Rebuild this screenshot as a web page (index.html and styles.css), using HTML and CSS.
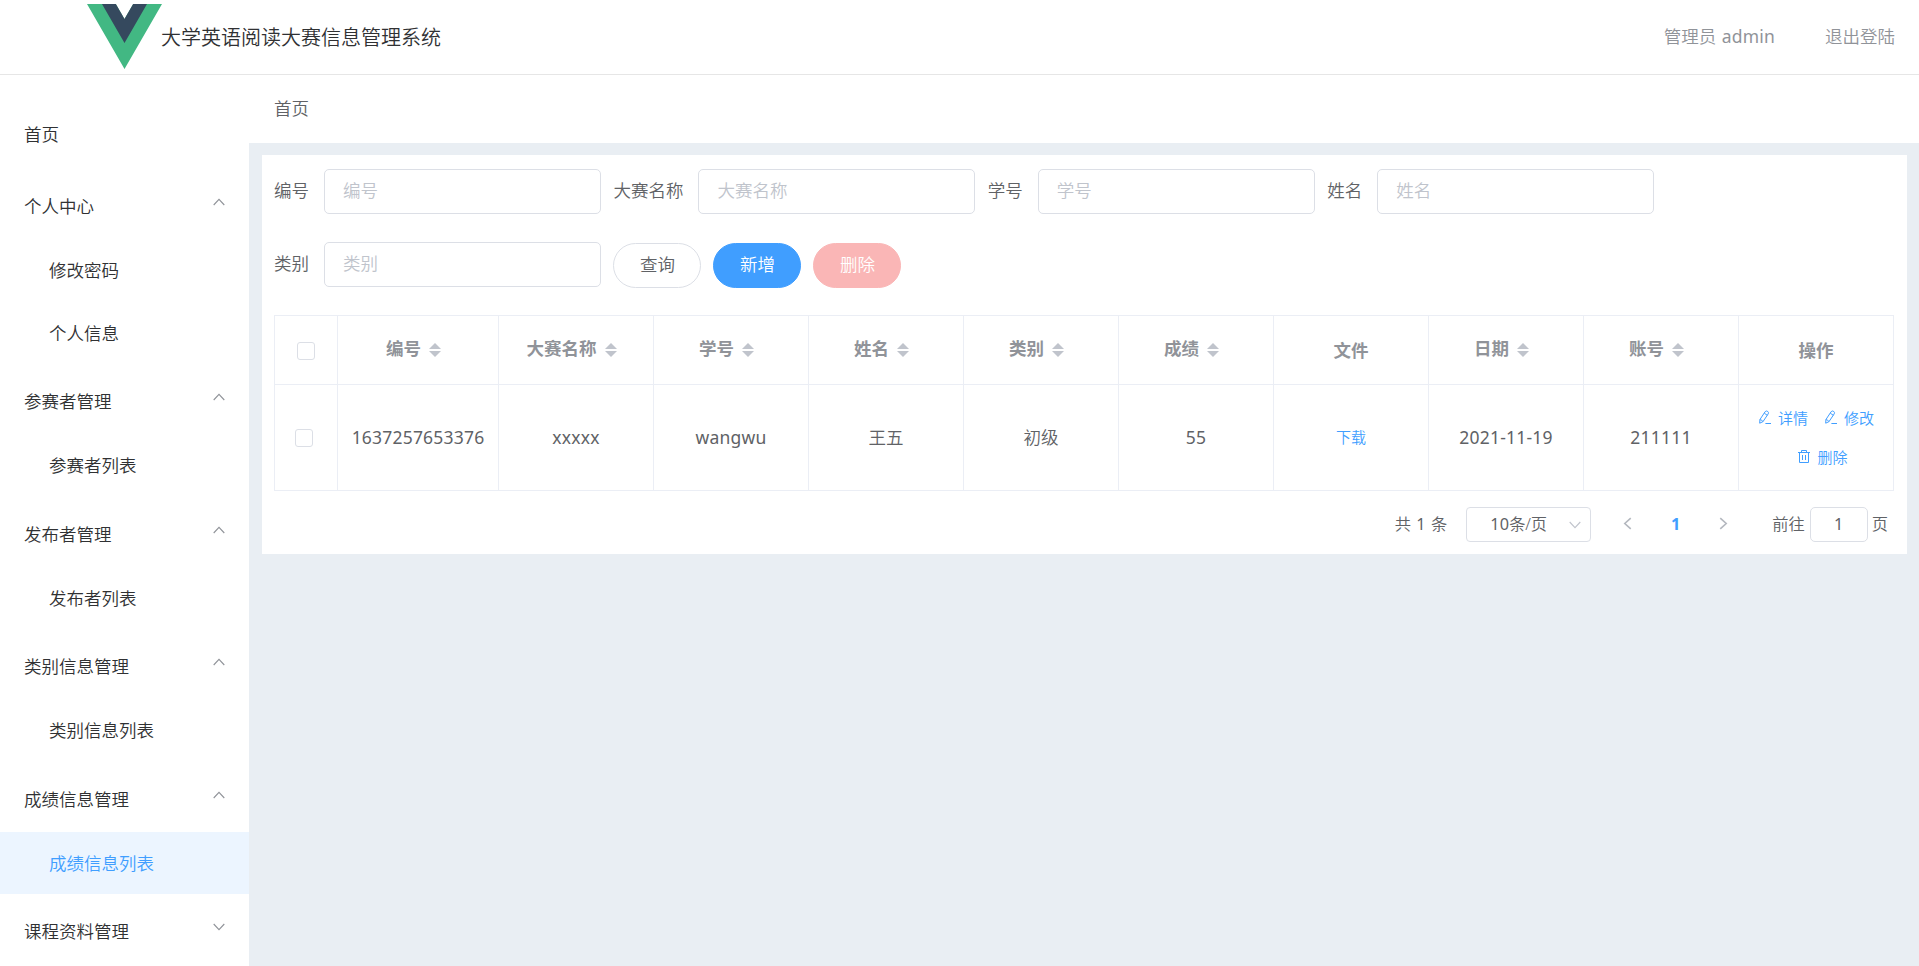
FILE: index.html
```html
<!DOCTYPE html>
<html lang="zh-CN">
<head>
  <meta charset="UTF-8" />
  <meta name="viewport" content="width=device-width, initial-scale=1.0"/>
  <title>大学英语阅读大赛信息管理系统</title>
  <link rel="stylesheet" href="styles.css">
</head>
<body>
  <!-- icons -->
  <svg class="sprite">
    <symbol id="arrow" viewBox="0 0 12 8"><path d="M0.7 1L6 6.6L11.3 1" fill="none" stroke="currentColor" stroke-width="1.1"/></symbol>
    <symbol id="edit" viewBox="0 0 14 15"><path d="M7.2 1.6Q8.4 0.4 9.8 1.5Q11 2.6 10.2 3.9L5 11.6L1.7 13.2L1.9 9.6ZM6.3 3.2L9.3 5.3M1.9 9.6Q4 9.8 5 11.6M7.4 13.5H13" fill="none" stroke="currentColor"/></symbol>
    <symbol id="trash" viewBox="0 0 14 15"><path d="M1 3.5H13M4.5 3V1.5H9.5V3M2.5 3.5V13.5H11.5V3.5M5.5 6V11M8.5 6V11" fill="none" stroke="currentColor"/></symbol>
  </svg>

  <header class="header">
    <div class="brand">
      <svg class="logo" viewBox="0 0 196.32 170.02">
        <path fill="#42b883" d="M120.83 0L98.16 39.26L75.49 0H0L98.16 170.02L196.32 0Z"/>
        <path fill="#35495e" d="M120.83 0L98.16 39.26L75.49 0H39.26L98.16 102.01L157.06 0Z"/>
      </svg>
      <span class="title">大学英语阅读大赛信息管理系统</span>
    </div>
    <div class="user">
      <span>管理员 <span class="latin">admin</span></span>
      <span>退出登陆</span>
    </div>
  </header>

  <div class="container">
    <aside class="sidebar">
      <div class="menu-title home">首页</div>
      <div class="menu-title">个人中心<svg class="arrow up"><use href="#arrow"/></svg></div>
      <div class="menu-item">修改密码</div>
      <div class="menu-item">个人信息</div>
      <div class="menu-title">参赛者管理<svg class="arrow up"><use href="#arrow"/></svg></div>
      <div class="menu-item">参赛者列表</div>
      <div class="menu-title">发布者管理<svg class="arrow up"><use href="#arrow"/></svg></div>
      <div class="menu-item">发布者列表</div>
      <div class="menu-title">类别信息管理<svg class="arrow up"><use href="#arrow"/></svg></div>
      <div class="menu-item">类别信息列表</div>
      <div class="menu-title">成绩信息管理<svg class="arrow up"><use href="#arrow"/></svg></div>
      <div class="menu-item active">成绩信息列表</div>
      <div class="menu-title">课程资料管理<svg class="arrow"><use href="#arrow"/></svg></div>
    </aside>

    <main class="main">
      <div class="breadcrumb">首页</div>

      <div class="card">
        <form class="search">
          <div class="form-item"><label>编号</label><input type="text" placeholder="编号"></div>
          <div class="form-item"><label>大赛名称</label><input type="text" placeholder="大赛名称"></div>
          <div class="form-item"><label>学号</label><input type="text" placeholder="学号"></div>
          <div class="form-item"><label>姓名</label><input type="text" placeholder="姓名"></div>
          <div class="form-item"><label>类别</label><input type="text" placeholder="类别"></div>
          <div class="buttons">
            <button type="button" class="btn">查询</button>
            <button type="button" class="btn primary">新增</button>
            <button type="button" class="btn danger" disabled>删除</button>
          </div>
        </form>

        <table class="table">
          <colgroup>
            <col class="col-check">
            <col class="col-id">
            <col span="9">
          </colgroup>
          <thead>
            <tr>
              <th><span class="checkbox"></span></th>
              <th class="sortable">编号<i class="sort"></i></th>
              <th class="sortable">大赛名称<i class="sort"></i></th>
              <th class="sortable">学号<i class="sort"></i></th>
              <th class="sortable">姓名<i class="sort"></i></th>
              <th class="sortable">类别<i class="sort"></i></th>
              <th class="sortable">成绩<i class="sort"></i></th>
              <th>文件</th>
              <th class="sortable">日期<i class="sort"></i></th>
              <th class="sortable">账号<i class="sort"></i></th>
              <th>操作</th>
            </tr>
          </thead>
          <tbody>
            <tr>
              <td class="check-cell"><span class="checkbox"></span></td>
              <td class="latin">1637257653376</td>
              <td class="latin">xxxxx</td>
              <td class="latin">wangwu</td>
              <td>王五</td>
              <td>初级</td>
              <td class="latin">55</td>
              <td class="file-cell"><a class="link">下载</a></td>
              <td class="latin">2021-11-19</td>
              <td class="latin">211111</td>
              <td>
                <div class="actions">
                  <a class="link"><svg class="icon"><use href="#edit"/></svg>详情</a>
                  <a class="link"><svg class="icon"><use href="#edit"/></svg>修改</a>
                  <a class="link delete"><svg class="icon"><use href="#trash"/></svg>删除</a>
                </div>
              </td>
            </tr>
          </tbody>
        </table>

        <div class="pagination">
          <span class="total">共 <span class="latin">1</span> 条</span>
          <div class="page-size"><span><span class="latin">10</span>条/页</span><svg class="arrow"><use href="#arrow"/></svg></div>
          <svg class="pager-btn" viewBox="0 0 8 12"><path d="M7 1L1.5 6L7 11"/></svg>
          <span class="page-num">1</span>
          <svg class="pager-btn" viewBox="0 0 8 12"><path d="M1 1L6.5 6L1 11"/></svg>
          <span class="jump-label">前往</span>
          <input class="jump latin" type="text" value="1">
          <span class="jump-unit">页</span>
        </div>
      </div>
    </main>
  </div>
</body>
</html>
```

FILE: styles.css
```css
* {
  box-sizing: border-box;
}

body {
  margin: 0;
  height: 966px;
  overflow: hidden;
  display: flex;
  flex-direction: column;
  font-family: "Noto Sans", "Noto Sans CJK SC", sans-serif;
  font-size: 17.5px;
  font-weight: 350;
  color: #606266;
  background: #fff;
}

.latin {
  font-weight: 400;
  letter-spacing: 0.2px;
}

.sprite {
  display: none;
}

.header {
  display: flex;
  justify-content: space-between;
  flex: none;
  height: 75px;
  padding: 0 24px 0 87px;
  border-bottom: 1px solid #e6e6e6;
}

.brand {
  display: flex;
}

.logo {
  width: 75px;
  height: 65px;
  margin-top: 4px;
}

.title {
  margin-left: -1px;
  font-size: 20px;
  line-height: 75px;
  color: #303133;
}

.user {
  display: flex;
  gap: 50px;
  line-height: 73px;
  word-spacing: 1px;
  color: #909399;
}

.container {
  display: flex;
  flex: 1;
  min-height: 0;
}

/* sidebar */
.sidebar {
  flex: none;
  width: 249px;
  padding-top: 24px;
  overflow: hidden;
  color: #303133;
}

.menu-title {
  display: flex;
  justify-content: space-between;
  height: 70px;
  line-height: 74px;
  padding: 0 24px;
}

.menu-title.home {
  line-height: 70px;
}

.menu-item {
  height: 62.5px;
  line-height: 62.5px;
  padding-left: 49px;
}

.menu-item.active {
  color: #409eff;
  background: #ecf5ff;
}

.arrow {
  flex: none;
  width: 12px;
  height: 8px;
  margin-top: 29px;
  color: #909399;
}

.arrow.up {
  transform: rotate(180deg);
}

/* content */
.main {
  flex: 1;
  background: #e9eef3;
}

.breadcrumb {
  height: 68px;
  padding-left: 25px;
  line-height: 67px;
  background: #fff;
}

.card {
  height: 399px;
  margin: 12px 12px 0 13px;
  padding: 14px 12px 0;
  background: #fff;
}

.search {
  display: flex;
  flex-wrap: wrap;
  align-content: flex-start;
  column-gap: 12.4px;
  row-gap: 28px;
  height: 146px;
}

.form-item {
  display: flex;
  height: 45px;
}

.form-item label {
  padding-right: 15px;
  line-height: 43px;
}

input {
  font-family: inherit;
  font-size: inherit;
  color: inherit;
  background: #fff;
  border: 1px solid #dcdfe6;
  border-radius: 5px;
  outline: none;
}

.form-item input {
  width: 277px;
  height: 45px;
  padding: 0 18px 3px;
  font-weight: 350;
}

input::placeholder {
  color: #c0c4cc;
}

.buttons {
  display: flex;
  gap: 12px;
  padding-top: 1px;
}

.btn {
  width: 88px;
  height: 45px;
  padding: 0 0 5px;
  font: inherit;
  color: #606266;
  background: #fff;
  border: 1px solid #dcdfe6;
  border-radius: 23px;
}

.btn.primary {
  color: #fff;
  background: #409eff;
  border-color: #409eff;
}

.btn.danger {
  color: #fff;
  background: #fab6b6;
  border-color: #fab6b6;
}

/* table */
.table {
  width: 1620px;
  table-layout: fixed;
  border-collapse: separate;
  border-spacing: 0;
  border-top: 1px solid #ebeef5;
  border-left: 1px solid #ebeef5;
  text-align: center;
}

.col-check {
  width: 63px;
}

.col-id {
  width: 161px;
}

th,
td {
  padding: 0 0 2px;
  border-right: 1px solid #ebeef5;
  border-bottom: 1px solid #ebeef5;
}

th {
  height: 69px;
  font-weight: bold;
  color: #909399;
}

th.sortable {
  padding-bottom: 6px;
}

td {
  height: 106px;
}

td.file-cell {
  padding-bottom: 4px;
}

.checkbox {
  display: inline-block;
  width: 18px;
  height: 18px;
  vertical-align: middle;
  border: 1px solid #dcdfe6;
  border-radius: 3px;
}

td.check-cell {
  padding: 0 5px 3px 0;
}

.sort {
  display: inline-flex;
  flex-direction: column;
  gap: 2px;
  margin: 0 9px 0 8px;
  vertical-align: middle;
}

.sort::before,
.sort::after {
  content: "";
  border: 6.5px solid transparent;
}

.sort::before {
  border-top: 0;
  border-bottom: 6px solid #c0c4cc;
}

.sort::after {
  border-bottom: 0;
  border-top: 6px solid #c0c4cc;
}

.link {
  display: inline-flex;
  align-items: center;
  font-size: 15px;
  color: #409eff;
}

.actions {
  display: flex;
  flex-wrap: wrap;
  justify-content: center;
  column-gap: 16px;
  row-gap: 18px;
}

.delete {
  margin-left: 13px;
}

.icon {
  width: 14px;
  height: 15px;
  margin-right: 6px;
}

/* pagination */
.pagination {
  display: flex;
  align-items: center;
  justify-content: flex-end;
  height: 35px;
  margin-top: 16px;
  padding-right: 7px;
  font-size: 16.25px;
}

.total,
.page-size > span,
.jump-label,
.jump-unit {
  padding-bottom: 3px;
}

.total {
  word-spacing: 1px;
}

.page-size {
  display: flex;
  align-items: center;
  justify-content: space-between;
  width: 125px;
  height: 35px;
  margin: 0 32px 0 19px;
  padding: 0 9px 0 23px;
  border: 1px solid #dcdfe6;
  border-radius: 4px;
}

.page-size > span {
  letter-spacing: -0.2px;
}

.page-size .arrow {
  margin: 0;
  color: #c0c4cc;
}

.pager-btn {
  width: 9px;
  height: 13px;
  margin-bottom: 2px;
  fill: none;
  stroke: #b4b8bf;
  stroke-width: 1.5;
}

.page-num {
  width: 87px;
  padding-bottom: 2px;
  text-align: center;
  font-weight: bold;
  color: #409eff;
}

.jump-label {
  margin-left: 44px;
}

.jump {
  width: 58px;
  height: 35px;
  margin: 0 4px 0 5px;
  padding: 0 0 2px;
  text-align: center;
}
```
